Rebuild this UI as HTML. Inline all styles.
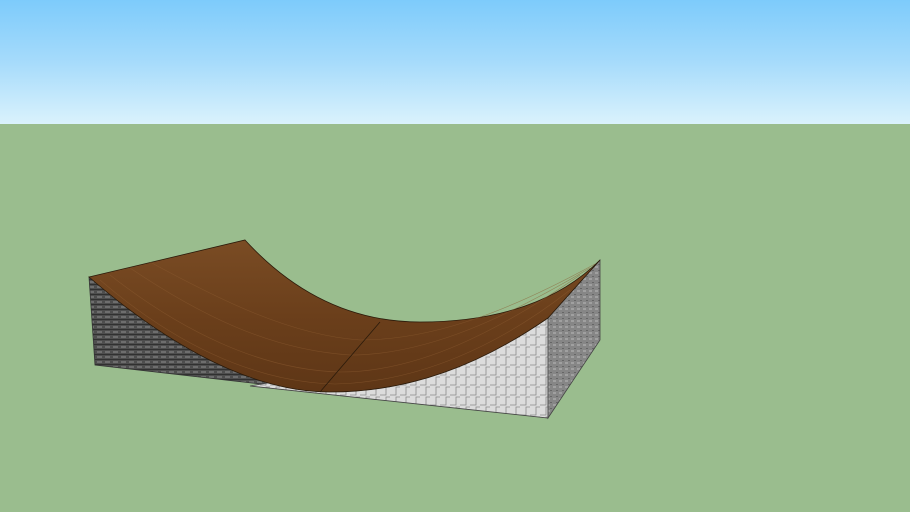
<!DOCTYPE html>
<html><head><style>html,body{margin:0;padding:0;width:910px;height:512px;overflow:hidden}</style></head>
<body>
<svg width="910" height="512" viewBox="0 0 910 512" xmlns="http://www.w3.org/2000/svg">
<defs>
<linearGradient id="sky" x1="0" y1="0" x2="0" y2="1">
<stop offset="0" stop-color="#7dcbfb"/><stop offset="0.5" stop-color="#a6dbfb"/><stop offset="1" stop-color="#daf2fc"/>
</linearGradient>
<linearGradient id="wood" x1="0" y1="0" x2="0" y2="1">
<stop offset="0" stop-color="#7a4c24"/><stop offset="0.5" stop-color="#6b3f1b"/><stop offset="1" stop-color="#5e3616"/>
</linearGradient>
<pattern id="dark" width="8" height="5" patternUnits="userSpaceOnUse">
<rect width="8" height="5" fill="#4e4e4e"/><rect x="1" y="1" width="5" height="2" fill="#6e6e6e"/><rect x="0" y="4" width="8" height="1" fill="#303030"/>
</pattern>
<pattern id="light" width="10" height="10" patternUnits="userSpaceOnUse">
<rect width="10" height="10" fill="#dcdcdc"/><path d="M0 5H6V0M6 10V7H10" stroke="#8a8a8a" stroke-width="0.8" fill="none"/>
</pattern>
<pattern id="side" width="6" height="6" patternUnits="userSpaceOnUse">
<rect width="6" height="6" fill="#868686"/><rect x="1" y="2" width="3" height="2" fill="#a0a0a0"/><rect x="4" y="0" width="2" height="1" fill="#666"/>
</pattern>
</defs>
<rect width="910" height="124" fill="url(#sky)"/>
<rect y="124" width="910" height="388" fill="#9abd8e"/>
<path d="M89,277 L95,365 L330,392 L300,330 Z" fill="url(#dark)" stroke="#333" stroke-width="0.8"/>
<path d="M250,386 L548,418 L548,318 L400,360 Z" fill="url(#light)" stroke="#444" stroke-width="0.8"/>
<path d="M548,318 L600,260 L600,340 L548,418Z" fill="url(#side)" stroke="#444" stroke-width="0.8"/>
<path d="M89,277 L245,240 C300,300 360,322 420,322 C500,322 560,300 600,260 L548,318 C480,365 410,392 330,392 C240,392 150,330 89,277Z" fill="url(#wood)" stroke="#2a1a0a" stroke-width="0.8"/>
<g stroke="#8a5a30" stroke-width="0.6" fill="none" opacity="0.6">
<path d="M110,275 C180,330 260,370 340,372 C420,372 500,330 580,275"/>
<path d="M130,268 C200,315 270,350 350,355 C430,355 510,315 590,268"/>
<path d="M150,262 C220,300 290,335 360,340 C440,340 520,305 595,264"/>
<path d="M100,280 C170,340 250,382 335,384 C420,382 500,345 570,290"/>
</g>
<path d="M380,322 L320,392" stroke="#2a1a0a" stroke-width="0.8"/>
</svg>
</body></html>
